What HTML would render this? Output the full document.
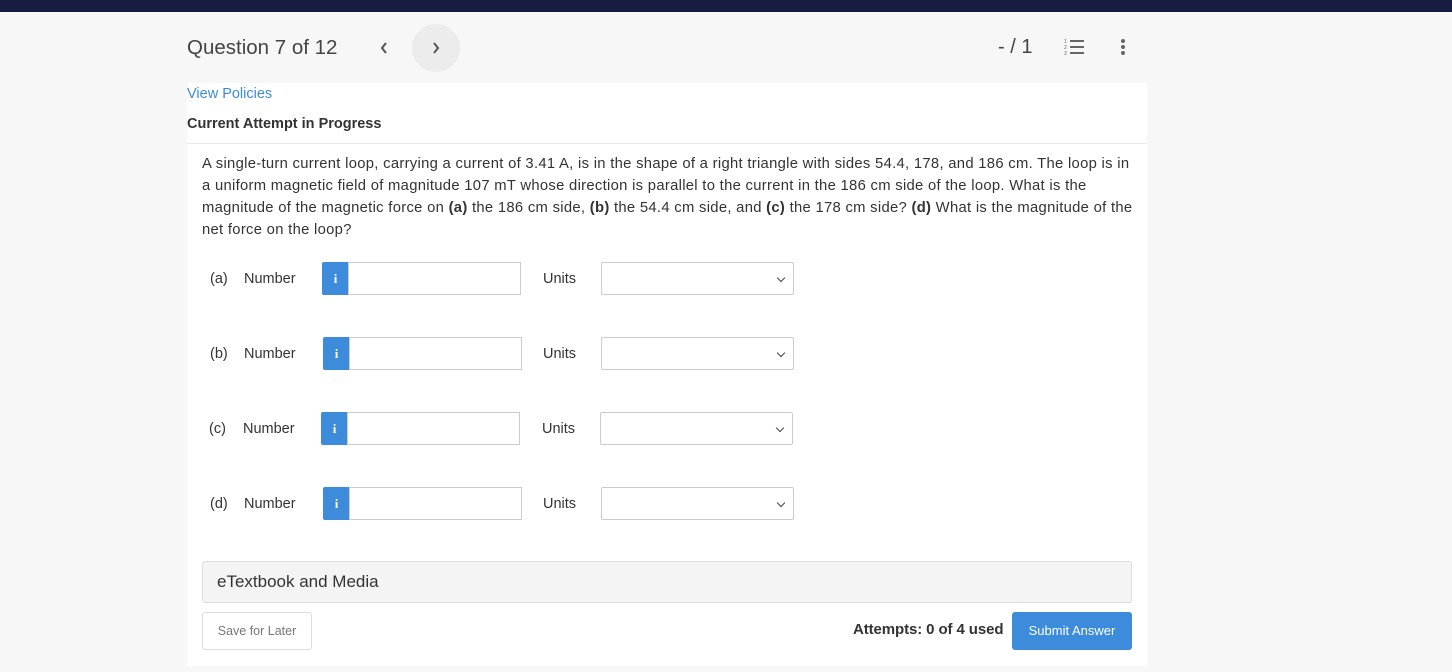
<!DOCTYPE html>
<html><head><meta charset="utf-8"><style>
*{margin:0;padding:0;box-sizing:border-box}
body{width:1452px;height:672px;background:#f7f7f7;font-family:"Liberation Sans",sans-serif;color:#333;position:relative;overflow:hidden}
.a{position:absolute;white-space:nowrap}
.top{left:0;top:0;width:1452px;height:12px;background:#161d40}
.card{left:187px;top:83px;width:960px;height:583px;background:#fff}
.lbl{font-size:14.5px;color:#333}
.ib{width:27px;height:33px;background:#3d8bdb;border-radius:2px 0 0 2px;color:#fff;font-weight:bold;font-size:13px;text-align:center;line-height:33px;font-family:"Liberation Serif",serif}
.inp{width:173px;height:33px;border:1px solid #ccc;background:#fff}
.sel{width:193px;height:33px;border:1px solid #ccc;background:#fff;border-radius:2px}
.sel:after{content:"";position:absolute;right:9px;top:12px;width:5px;height:5px;border-right:1.8px solid #444;border-bottom:1.8px solid #444;transform:rotate(45deg)}
</style></head><body>
<div class="a top"></div>
<div class="a card"></div>
<div class="a" style="left:187px;top:36px;font-size:20.5px;color:#444">Question 7 of 12</div>
<svg class="a" style="left:379px;top:41px" width="10" height="14"><path d="M7 2 L3 7 L7 12" fill="none" stroke="#555" stroke-width="2"/></svg>
<div class="a" style="left:412px;top:24px;width:48px;height:48px;border-radius:50%;background:#ececec"></div>
<svg class="a" style="left:431px;top:41px" width="10" height="14"><path d="M3 2 L7 7 L3 12" fill="none" stroke="#555" stroke-width="2"/></svg>
<div class="a" style="left:998px;top:36px;font-size:20px;color:#444">- / 1</div>
<svg class="a" style="left:1064px;top:38px" width="22" height="18"><g fill="#666"><rect x="6" y="2" width="14" height="2"/><rect x="6" y="8" width="14" height="2"/><rect x="6" y="14" width="14" height="2"/></g><text x="0" y="5" font-size="5" fill="#666">1</text><text x="0" y="11" font-size="5" fill="#666">2</text><text x="0" y="17" font-size="5" fill="#666">3</text></svg>
<svg class="a" style="left:1119px;top:38px" width="8" height="20"><g fill="#666"><circle cx="4" cy="3" r="2"/><circle cx="4" cy="9" r="2"/><circle cx="4" cy="15" r="2"/></g></svg>
<div class="a" style="left:187px;top:86px;font-size:14.5px;color:#3d8bdb">View Policies</div>
<div class="a" style="left:187px;top:116px;font-size:14.5px;font-weight:bold;color:#333">Current Attempt in Progress</div>
<div class="a" style="left:187px;top:143px;width:960px;height:1px;background:#e8e8e8"></div>
<div class="a" style="left:202px;top:153px;font-size:14.8px;line-height:22px;color:#333;letter-spacing:0.3px">A single-turn current loop, carrying a current of 3.41 A, is in the shape of a right triangle with sides 54.4, 178, and 186 cm. The loop is in<br>a uniform magnetic field of magnitude 107 mT whose direction is parallel to the current in the 186 cm side of the loop. What is the<br>magnitude of the magnetic force on <b>(a)</b> the 186 cm side, <b>(b)</b> the 54.4 cm side, and <b>(c)</b> the 178 cm side? <b>(d)</b> What is the magnitude of the<br>net force on the loop?</div>

<div class="a lbl" style="left:210px;top:271px">(a)</div><div class="a lbl" style="left:244px;top:271px">Number</div>
<div class="a ib" style="left:322px;top:262px">i</div><div class="a inp" style="left:348px;top:262px"></div>
<div class="a lbl" style="left:543px;top:271px">Units</div><div class="a sel" style="left:601px;top:262px"></div>

<div class="a lbl" style="left:210px;top:346px">(b)</div><div class="a lbl" style="left:244px;top:346px">Number</div>
<div class="a ib" style="left:323px;top:337px">i</div><div class="a inp" style="left:349px;top:337px"></div>
<div class="a lbl" style="left:543px;top:346px">Units</div><div class="a sel" style="left:601px;top:337px"></div>

<div class="a lbl" style="left:209px;top:421px">(c)</div><div class="a lbl" style="left:243px;top:421px">Number</div>
<div class="a ib" style="left:321px;top:412px">i</div><div class="a inp" style="left:347px;top:412px"></div>
<div class="a lbl" style="left:542px;top:421px">Units</div><div class="a sel" style="left:600px;top:412px"></div>

<div class="a lbl" style="left:210px;top:496px">(d)</div><div class="a lbl" style="left:244px;top:496px">Number</div>
<div class="a ib" style="left:323px;top:487px">i</div><div class="a inp" style="left:349px;top:487px"></div>
<div class="a lbl" style="left:543px;top:496px">Units</div><div class="a sel" style="left:601px;top:487px"></div>

<div class="a" style="left:202px;top:561px;width:930px;height:42px;background:#f4f4f4;border:1px solid #ddd;border-radius:3px"></div>
<div class="a" style="left:217px;top:572px;font-size:17px;color:#333">eTextbook and Media</div>
<div class="a" style="left:202px;top:612px;width:110px;height:38px;border:1px solid #ddd;border-radius:3px;font-size:12.5px;color:#777;text-align:center;line-height:36px">Save for Later</div>
<div class="a" style="left:853px;top:621px;font-size:15px;font-weight:bold;color:#333;letter-spacing:-0.1px">Attempts: 0 of 4 used</div>
<div class="a" style="left:1012px;top:612px;width:120px;height:38px;background:#3d8bdb;border-radius:3px;font-size:13px;color:#fff;text-align:center;line-height:38px">Submit Answer</div>
</body></html>
